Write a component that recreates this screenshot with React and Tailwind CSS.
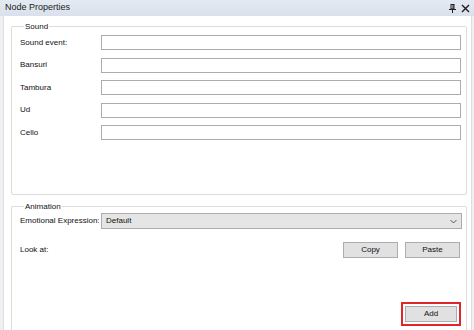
import React from 'react';

const font = { fontFamily: '"Liberation Sans", Arial, sans-serif' };

const soundRows = ['Sound event:', 'Bansuri', 'Tambura', 'Ud', 'Cello'];

const PinIcon = () => (
  <svg width="9" height="9" viewBox="0 0 9 9" className="block">
    <rect x="3" y="0.5" width="3" height="4.5" fill="none" stroke="#1e1e1e" strokeWidth="1" />
    <line x1="5" y1="1" x2="5" y2="5" stroke="#1e1e1e" strokeWidth="1" />
    <line x1="1" y1="5.5" x2="8" y2="5.5" stroke="#1e1e1e" strokeWidth="1" />
    <line x1="4.5" y1="6" x2="4.5" y2="9" stroke="#1e1e1e" strokeWidth="1" />
  </svg>
);

const CloseIcon = () => (
  <svg width="9" height="9" viewBox="0 0 9 9" className="block">
    <path d="M1 1 L8 8 M8 1 L1 8" stroke="#1e1e1e" strokeWidth="1.4" />
  </svg>
);

const Button = ({ children, className = '' }) => (
  <button
    className={`block h-[16px] border border-[#adadad] bg-[#e1e1e1] text-[8px] text-[#111] leading-none ${className}`}
  >
    {children}
  </button>
);

export default function App() {
  return (
    <div className="w-[474px] h-[330px] overflow-hidden bg-[#eef0f3] flex flex-col" style={font}>
      {/* Title bar */}
      <div className="h-[16px] flex-shrink-0 flex items-center justify-between pl-[5px] pr-[4px] bg-gradient-to-b from-[#e4eaf2] to-[#d9e1ec]">
        <span className="text-[9px] text-[#1b1b1b]">Node Properties</span>
        <div className="flex items-center gap-[4px]">
          <PinIcon />
          <CloseIcon />
        </div>
      </div>

      {/* Content */}
      <div className="flex-1 ml-[3px] mr-[2px] border-l border-r border-[#dedede] bg-white pl-[7px] pr-[4px] pt-[5px]">
        <fieldset className="border border-[#dcdcdc] rounded-[2px] h-[174px] pl-[8px] pr-[5px] pt-[3px]">
          <legend className="ml-[4px] px-[1px] text-[8px] text-[#111] leading-[11px]">Sound</legend>
          <div className="flex flex-col gap-[7.5px]">
            {soundRows.map((label) => (
              <div key={label} className="flex items-center h-[15px]">
                <span className="w-[81px] text-[8px] text-[#111]">{label}</span>
                <div className="flex-1 h-[15px] border border-[#acacac] bg-white" />
              </div>
            ))}
          </div>
        </fieldset>

        <fieldset className="mt-[6px] border border-[#dcdcdc] rounded-[2px] h-[140px] pl-[8px] pr-[4px] pt-[1px]">
          <legend className="ml-[4px] px-[1px] text-[8px] text-[#111] leading-[11px]">Animation</legend>
          <div className="flex items-center h-[16px]">
            <span className="w-[81px] text-[8px] text-[#111]">Emotional Expression:</span>
            <div className="flex-1 h-[16px] border border-[#acacac] bg-[#e5e5e5] flex items-center justify-between pl-[4px] pr-[4px]">
              <span className="text-[8px] text-[#111]">Default</span>
              <svg width="7" height="5" viewBox="0 0 7 5" className="block">
                <path d="M0.5 1 L3.5 4 L6.5 1" fill="none" stroke="#555" strokeWidth="1" />
              </svg>
            </div>
          </div>
          <div className="flex items-center h-[16px] mt-[13px]">
            <span className="flex-1 text-[8px] text-[#111]">Look at:</span>
            <Button className="w-[55px]">Copy</Button>
            <Button className="w-[55px] ml-[7px] mr-[2px]">Paste</Button>
          </div>
          <div className="flex justify-end mt-[44px] pr-[1px]">
            <div className="flex border-2 border-[#e0252b] p-[2px]">
              <Button className="w-[52px]">Add</Button>
            </div>
          </div>
        </fieldset>
      </div>
    </div>
  );
}
